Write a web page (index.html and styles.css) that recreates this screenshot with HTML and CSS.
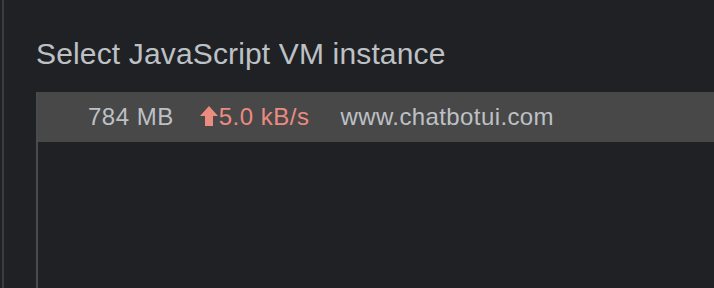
FILE: index.html
```html
<!DOCTYPE html>
<html lang="en">
<head>
    <meta charset="UTF-8">
    <title>Select JavaScript VM instance</title>
    <link rel="stylesheet" href="styles.css">
</head>
<body>
    <div class="panel">
        <h1 class="title">Select JavaScript VM instance</h1>

        <!-- VM instance list -->
        <div class="vm-list">
            <div class="vm-item selected">
                <span class="vm-memory">784 MB</span>
                <span class="vm-speed">
                    <svg class="arrow" viewBox="0 0 18 20" width="18" height="20">
                        <path d="M9 0 L18 10 L13 10 L13 20 L5 20 L5 10 L0 10 Z"/>
                    </svg>5.0 kB/s
                </span>
                <span class="vm-url">www.chatbotui.com</span>
            </div>
        </div>
    </div>
</body>
</html>
```

FILE: styles.css
```css
/* base */
html, body {
    height: 100%;
}

body {
    margin: 0;
    padding-left: 2px;
    background: #202124;
    font-family: 'Liberation Sans', Arial, sans-serif;
    color: #bdc1c6;
    overflow: hidden;
}

/* panel */
.panel {
    height: 100%;
    border-left: 2px solid #3c3d41;
    padding-left: 32px;
    display: flex;
    flex-direction: column;
}

.title {
    margin: 37px 0 21px;
    font-size: 30px;
    line-height: 34px;
    font-weight: normal;
    letter-spacing: 0.15px;
    color: #bdc1c6;
}

/* list */
.vm-list {
    flex: 1;
    border-left: 2px solid #4a4b4d;
    margin-right: -20px;
}

.vm-item {
    display: flex;
    align-items: center;
    height: 50px;
    padding-left: 50px;
    font-size: 24px;
    line-height: 50px;
    letter-spacing: 0.5px;
    white-space: nowrap;
}

.vm-item.selected {
    background: #484848;
}

.vm-memory {
    margin-right: 26px;
}

.vm-speed {
    display: flex;
    align-items: center;
    color: #ec8b80;
    margin-right: 31px;
}

.vm-url {
    letter-spacing: 0.4px;
}

.arrow {
    fill: #ec8b80;
    margin-right: 1px;
    margin-top: -2px;
}
```
